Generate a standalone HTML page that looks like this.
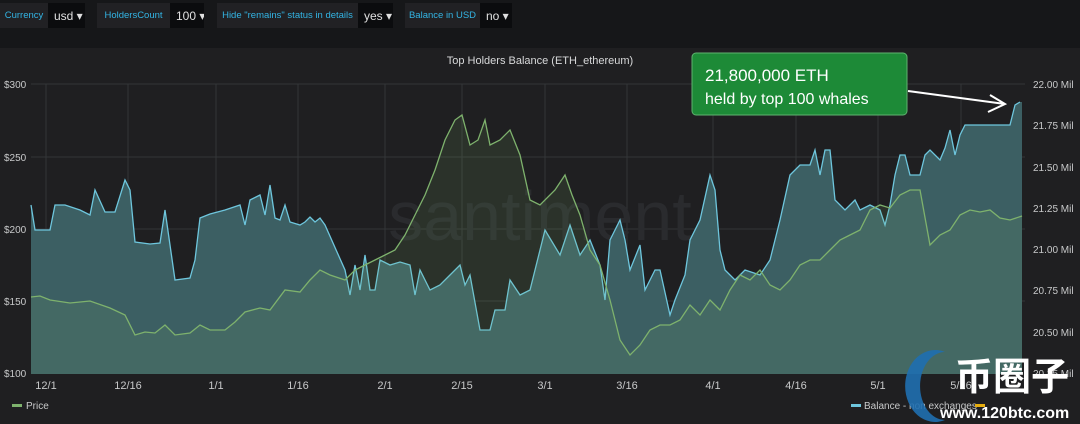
<!DOCTYPE html>
<html><head><meta charset="utf-8"><style>
body{margin:0;width:1080px;height:424px;background:#161719;font-family:"Liberation Sans",sans-serif;overflow:hidden;position:relative}
.b{position:absolute;top:3px;height:25px;line-height:25px;font-size:9.5px;white-space:nowrap;overflow:hidden}
.l{background:#212124;color:#33b5e5;text-align:center}
.s{background:#0b0c0e;color:#e0e0e0;font-size:12px;line-height:27px;padding-left:6px;box-sizing:border-box}
.panel{position:absolute;top:48px;left:0;width:1080px;height:376px;background:#1f1f21}
</style></head><body>
<div class="b l" style="left:0;width:48px">Currency</div><div class="b s" style="left:48px;width:37px">usd ▾</div>
<div class="b l" style="left:97px;width:73px">HoldersCount</div><div class="b s" style="left:170px;width:34px">100 ▾</div>
<div class="b l" style="left:217px;width:141px">Hide "remains" status in details</div><div class="b s" style="left:358px;width:35px">yes ▾</div>
<div class="b l" style="left:405px;width:75px">Balance in USD</div><div class="b s" style="left:480px;width:32px">no ▾</div>
<div class="panel"></div>
<svg width="1080" height="424" style="position:absolute;top:0;left:0" font-family="Liberation Sans, sans-serif">
<text x="540" y="64" fill="#d8d9da" font-size="11" text-anchor="middle">Top Holders Balance (ETH_ethereum)</text>
<g stroke="#333538" stroke-width="1">
<line x1="31" y1="84" x2="1025" y2="84"/><line x1="31" y1="157" x2="1025" y2="157"/><line x1="31" y1="229" x2="1025" y2="229"/><line x1="31" y1="301" x2="1025" y2="301"/>
<line x1="46" y1="84" x2="46" y2="374"/><line x1="128" y1="84" x2="128" y2="374"/><line x1="216" y1="84" x2="216" y2="374"/><line x1="298" y1="84" x2="298" y2="374"/><line x1="385" y1="84" x2="385" y2="374"/><line x1="462" y1="84" x2="462" y2="374"/><line x1="545" y1="84" x2="545" y2="374"/><line x1="627" y1="84" x2="627" y2="374"/><line x1="713" y1="84" x2="713" y2="374"/><line x1="796" y1="84" x2="796" y2="374"/><line x1="878" y1="84" x2="878" y2="374"/><line x1="961" y1="84" x2="961" y2="374"/>
</g>
<text x="540" y="240" fill="#2a2b2e" font-size="70" text-anchor="middle">santiment</text>
<polygon fill="#3c5f63" points="31,374 31,205 35,230 50,230 55,205 65,205 80,210 90,215 95,190 105,212 115,212 125,180 130,190 135,242 150,244 160,243 165,210 175,280 190,278 195,260 200,218 210,214 225,210 240,205 245,225 250,200 260,195 265,215 270,185 275,218 280,220 285,205 290,222 300,225 305,222 310,217 315,222 320,218 325,225 345,270 350,295 355,265 360,290 365,255 370,290 375,290 380,260 390,265 400,262 410,265 415,295 420,270 430,290 440,285 450,275 460,265 465,285 470,275 480,330 490,330 495,310 505,310 510,280 520,295 530,290 545,230 560,255 570,225 580,255 590,240 600,265 605,300 610,240 620,220 625,240 630,270 640,245 645,290 655,270 660,270 670,315 675,300 685,275 690,240 700,220 710,175 715,190 720,250 725,270 735,280 740,275 745,270 760,275 770,260 780,220 790,175 800,165 810,165 815,150 820,175 825,150 830,150 835,200 845,210 855,200 860,210 870,205 880,210 885,225 890,205 895,175 900,155 905,155 910,175 920,175 925,155 930,150 940,160 945,148 950,130 955,155 960,135 965,125 1005,125 1010,125 1015,105 1020,102 1022,102 1022,374"/>
<polyline fill="none" stroke="#6ec6dd" stroke-width="1.3" points="31,205 35,230 50,230 55,205 65,205 80,210 90,215 95,190 105,212 115,212 125,180 130,190 135,242 150,244 160,243 165,210 175,280 190,278 195,260 200,218 210,214 225,210 240,205 245,225 250,200 260,195 265,215 270,185 275,218 280,220 285,205 290,222 300,225 305,222 310,217 315,222 320,218 325,225 345,270 350,295 355,265 360,290 365,255 370,290 375,290 380,260 390,265 400,262 410,265 415,295 420,270 430,290 440,285 450,275 460,265 465,285 470,275 480,330 490,330 495,310 505,310 510,280 520,295 530,290 545,230 560,255 570,225 580,255 590,240 600,265 605,300 610,240 620,220 625,240 630,270 640,245 645,290 655,270 660,270 670,315 675,300 685,275 690,240 700,220 710,175 715,190 720,250 725,270 735,280 740,275 745,270 760,275 770,260 780,220 790,175 800,165 810,165 815,150 820,175 825,150 830,150 835,200 845,210 855,200 860,210 870,205 880,210 885,225 890,205 895,175 900,155 905,155 910,175 920,175 925,155 930,150 940,160 945,148 950,130 955,155 960,135 965,125 1005,125 1010,125 1015,105 1020,102"/>
<polygon fill="rgba(126,178,109,0.13)" points="31,374 31,297 40,296 50,300 70,303 90,301 110,308 125,315 135,335 145,332 155,333 165,325 175,335 190,333 200,325 210,330 225,330 235,322 245,312 260,308 270,310 285,290 300,292 310,280 320,270 330,275 345,280 355,270 365,265 375,260 385,255 395,250 405,235 415,215 425,195 435,170 445,140 455,120 462,115 470,145 478,140 485,120 490,145 500,140 510,130 520,155 530,200 540,205 555,190 565,175 572,195 580,215 590,250 600,265 610,300 620,340 630,355 640,345 650,330 660,325 670,325 680,320 690,305 700,315 710,300 720,310 730,290 740,275 750,280 760,270 770,285 780,290 790,280 800,265 810,260 820,260 830,250 840,240 850,235 860,230 870,210 880,205 890,208 900,195 910,190 920,190 930,245 940,235 950,230 960,215 970,210 980,212 990,210 1000,218 1010,220 1022,216 1022,374"/>
<polyline fill="none" stroke="#7eb26d" stroke-width="1.3" points="31,297 40,296 50,300 70,303 90,301 110,308 125,315 135,335 145,332 155,333 165,325 175,335 190,333 200,325 210,330 225,330 235,322 245,312 260,308 270,310 285,290 300,292 310,280 320,270 330,275 345,280 355,270 365,265 375,260 385,255 395,250 405,235 415,215 425,195 435,170 445,140 455,120 462,115 470,145 478,140 485,120 490,145 500,140 510,130 520,155 530,200 540,205 555,190 565,175 572,195 580,215 590,250 600,265 610,300 620,340 630,355 640,345 650,330 660,325 670,325 680,320 690,305 700,315 710,300 720,310 730,290 740,275 750,280 760,270 770,285 780,290 790,280 800,265 810,260 820,260 830,250 840,240 850,235 860,230 870,210 880,205 890,208 900,195 910,190 920,190 930,245 940,235 950,230 960,215 970,210 980,212 990,210 1000,218 1010,220 1022,216"/>
<g fill="#c8c9ca" font-size="10">
<text x="4" y="88">$300</text><text x="4" y="161">$250</text><text x="4" y="233">$200</text><text x="4" y="305">$150</text><text x="4" y="377">$100</text>
<text x="1033" y="88">22.00 Mil</text><text x="1033" y="129">21.75 Mil</text><text x="1033" y="171">21.50 Mil</text><text x="1033" y="212">21.25 Mil</text><text x="1033" y="253">21.00 Mil</text><text x="1033" y="294">20.75 Mil</text><text x="1033" y="336">20.50 Mil</text><text x="1033" y="377">20.25 Mil</text>
</g>
<g fill="#c8c9ca" font-size="11" text-anchor="middle">
<text x="46" y="389">12/1</text><text x="128" y="389">12/16</text><text x="216" y="389">1/1</text><text x="298" y="389">1/16</text><text x="385" y="389">2/1</text><text x="462" y="389">2/15</text><text x="545" y="389">3/1</text><text x="627" y="389">3/16</text><text x="713" y="389">4/1</text><text x="796" y="389">4/16</text><text x="878" y="389">5/1</text><text x="961" y="389">5/16</text>
</g>
<rect x="12" y="404" width="10" height="3" fill="#7eb26d"/><text x="26" y="409" fill="#c8c9ca" font-size="10">Price</text>
<rect x="851" y="404" width="10" height="3" fill="#6ec6dd"/><text x="864" y="409" fill="#c8c9ca" font-size="10">Balance - non exchanges</text>
<rect x="975" y="404" width="10" height="3" fill="#e5ac0e"/>
<rect x="692" y="53" width="215" height="62" rx="4" fill="#1d8a37" stroke="#5fb36f" stroke-width="1"/>
<text x="705" y="81" fill="#fff" font-size="17">21,800,000 ETH</text>
<text x="705" y="104" fill="#fff" font-size="16">held by top 100 whales</text>
<path d="M908,91 L1005,104 M990,95 L1005,104 L988,112" stroke="#fff" stroke-width="2" fill="none"/>
<path d="M945,352 A30,36 0 1 0 945,420 A22,30 0 1 1 945,352Z" fill="#1f6fb0" opacity="0.9"/>
<text x="955" y="390" fill="#fff" font-size="38" font-weight="bold" font-family="Noto Sans CJK SC, sans-serif">币圈子</text>
<text x="940" y="418" fill="#fff" font-size="16" font-weight="bold">www.120btc.com</text>
</svg>
</body></html>
